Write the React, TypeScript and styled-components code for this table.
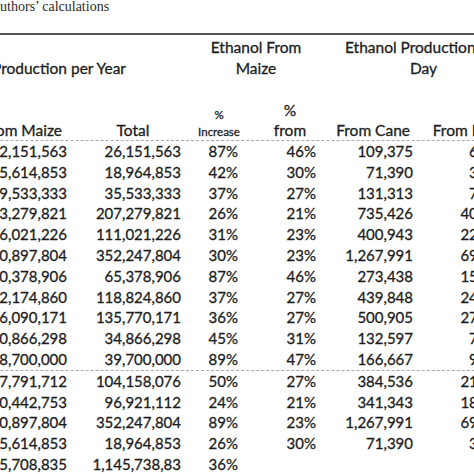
import React from 'react';
import styled, { createGlobalStyle } from 'styled-components';

type Row = [string, string, string, string, string, string, string];

const groupOne: Row[] = [
    ['14,000,000', '12,151,563', '26,151,563', '87%', '46%', '109,375', '66,584'],
    ['13,350,000', '5,614,853', '18,964,853', '42%', '30%', '71,390', '30,767'],
    ['26,000,000', '9,533,333', '35,533,333', '37%', '27%', '131,313', '72,456'],
    ['164,000,000', '43,279,821', '207,279,821', '26%', '21%', '735,426', '403,187'],
    ['85,000,000', '26,021,226', '111,021,226', '31%', '23%', '400,943', '226,082'],
    ['271,350,000', '80,897,804', '352,247,804', '30%', '23%', '1,267,991', '693,982'],
    ['35,000,000', '30,378,906', '65,378,906', '87%', '46%', '273,438', '152,198'],
    ['86,650,000', '32,174,860', '118,824,860', '37%', '27%', '439,848', '241,209'],
    ['99,680,000', '36,090,171', '135,770,171', '36%', '27%', '500,905', '273,015'],
    ['24,000,000', '10,866,298', '34,866,298', '45%', '31%', '132,597', '73,471'],
    ['21,000,000', '18,700,000', '39,700,000', '89%', '47%', '166,667', '95,238'],
];

const groupTwo: Row[] = [
    ['76,366,364', '27,791,712', '104,158,076', '50%', '27%', '384,536', '216,093'],
    ['76,478,359', '20,442,753', '96,921,112', '24%', '21%', '341,343', '187,014'],
    ['271,350,000', '80,897,804', '352,247,804', '89%', '23%', '1,267,991', '693,982'],
    ['13,350,000', '5,614,853', '18,964,853', '26%', '30%', '71,390', '30,767'],
    ['840,030,000', '305,708,835', '1,145,738,83', '36%', '', '', ''],
];

// right padding of each data column
const dataPad = [0, 0, 0, 12, 6, 7, 9];

const App: React.FC = () => {
    const renderRow = (row: Row, i: number, first = false) => (
        <DataRow key={i} $divider={first}>
            {row.map((v, c) => (
                <Num key={c} $pad={dataPad[c]}>{v}</Num>
            ))}
        </DataRow>
    );

    return (
        <>
            <GlobalStyle />
            <Page>
                <Caption>Authors’ calculations</Caption>
                <Table>
                    <Header>
                        <GroupRow>
                            <GroupCell $span={3} $align="right" $padRight={55} $padLeft={0}>
                                Ethanol Production per Year
                            </GroupCell>
                            <GroupCell $span={2} $align="center" $padRight={0} $padLeft={9}>
                                Ethanol From<br />Maize
                            </GroupCell>
                            <GroupCell $span={2} $align="center" $padRight={0} $padLeft={0}>
                                Ethanol Production per<br />Day
                            </GroupCell>
                        </GroupRow>
                        <SubRow>
                            <SubCell $align="right" $padLeft={0} $padRight={5}>From Cane</SubCell>
                            <SubCell $align="right" $padLeft={0} $padRight={5}>From Maize</SubCell>
                            <SubCell $align="center" $padLeft={18} $padRight={0}>Total</SubCell>
                            <SubCell $align="center" $padLeft={7} $padRight={0} $small>%<br />Increase</SubCell>
                            <SubCell $align="center" $padLeft={8} $padRight={0}>%<br />from</SubCell>
                            <SubCell $align="right" $padLeft={0} $padRight={10}>From Cane</SubCell>
                            <SubCell $align="center" $padLeft={0} $padRight={0}>From Maize</SubCell>
                        </SubRow>
                    </Header>
                    {groupOne.map((r, i) => renderRow(r, i))}
                    {groupTwo.map((r, i) => renderRow(r, i + 100, i === 0))}
                </Table>
            </Page>
        </>
    );
};

const GlobalStyle = createGlobalStyle`
  html, body {
    margin: 0;
    padding: 0;
    background: #ffffff;
    overflow: hidden;
  }
  body {
    width: 474px;
    height: 474px;
  }
`;

const Page = styled.div`
  width: 474px;
  height: 474px;
  overflow: hidden;
  background: #fff;
  color: #222;
`;

const Caption = styled.div`
  height: 33px;
  text-indent: -10px;
  font-family: "Liberation Serif", "Times New Roman", serif;
  font-size: 14px;
  line-height: 14px;
  color: #2a2a2a;
  white-space: nowrap;
`;

const Table = styled.div`
  margin-left: -125px;
  width: 650px;
  border-top: 2px solid #555;
  font-family: Lato, "Open Sans", sans-serif;
  font-size: 15px;
  color: #1c1c1c;
  -webkit-text-stroke: 0.3px #1c1c1c;
`;

const cols = '78px 114px 114px 69px 72px 98px 105px';

const Header = styled.div`
  border-bottom: 1px dashed #a8a8a8;
`;

const GroupRow = styled.div`
  display: grid;
  grid-template-columns: ${cols};
  height: 44px;
`;

const GroupCell = styled.div<{ $span: number; $align: string; $padLeft: number; $padRight: number }>`
  grid-column: span ${p => p.$span};
  text-align: ${p => p.$align};
  padding: 2px ${p => p.$padRight}px 0 ${p => p.$padLeft}px;
  font-size: 15.5px;
  line-height: 21px;
  white-space: nowrap;
  align-self: end;
`;

const SubRow = styled.div`
  display: grid;
  grid-template-columns: ${cols};
  height: 61px;
  align-items: end;
`;

const SubCell = styled.div<{ $align: string; $padLeft: number; $padRight: number; $small?: boolean }>`
  text-align: ${p => p.$align};
  padding: 0 ${p => p.$padRight}px 0 ${p => p.$padLeft}px;
  font-size: ${p => (p.$small ? '11.5px' : '15.5px')};
  line-height: ${p => (p.$small ? '17px' : '20px')};
  white-space: nowrap;
`;

const DataRow = styled.div<{ $divider: boolean }>`
  display: grid;
  grid-template-columns: ${cols};
  height: 20.8px;
  align-items: center;
  border-top: ${p => (p.$divider ? '1px dashed #a8a8a8' : 'none')};
`;

const Num = styled.div<{ $pad: number }>`
  text-align: right;
  padding-right: ${p => p.$pad}px;
  line-height: 20.8px;
  white-space: nowrap;
`;

export default App;
